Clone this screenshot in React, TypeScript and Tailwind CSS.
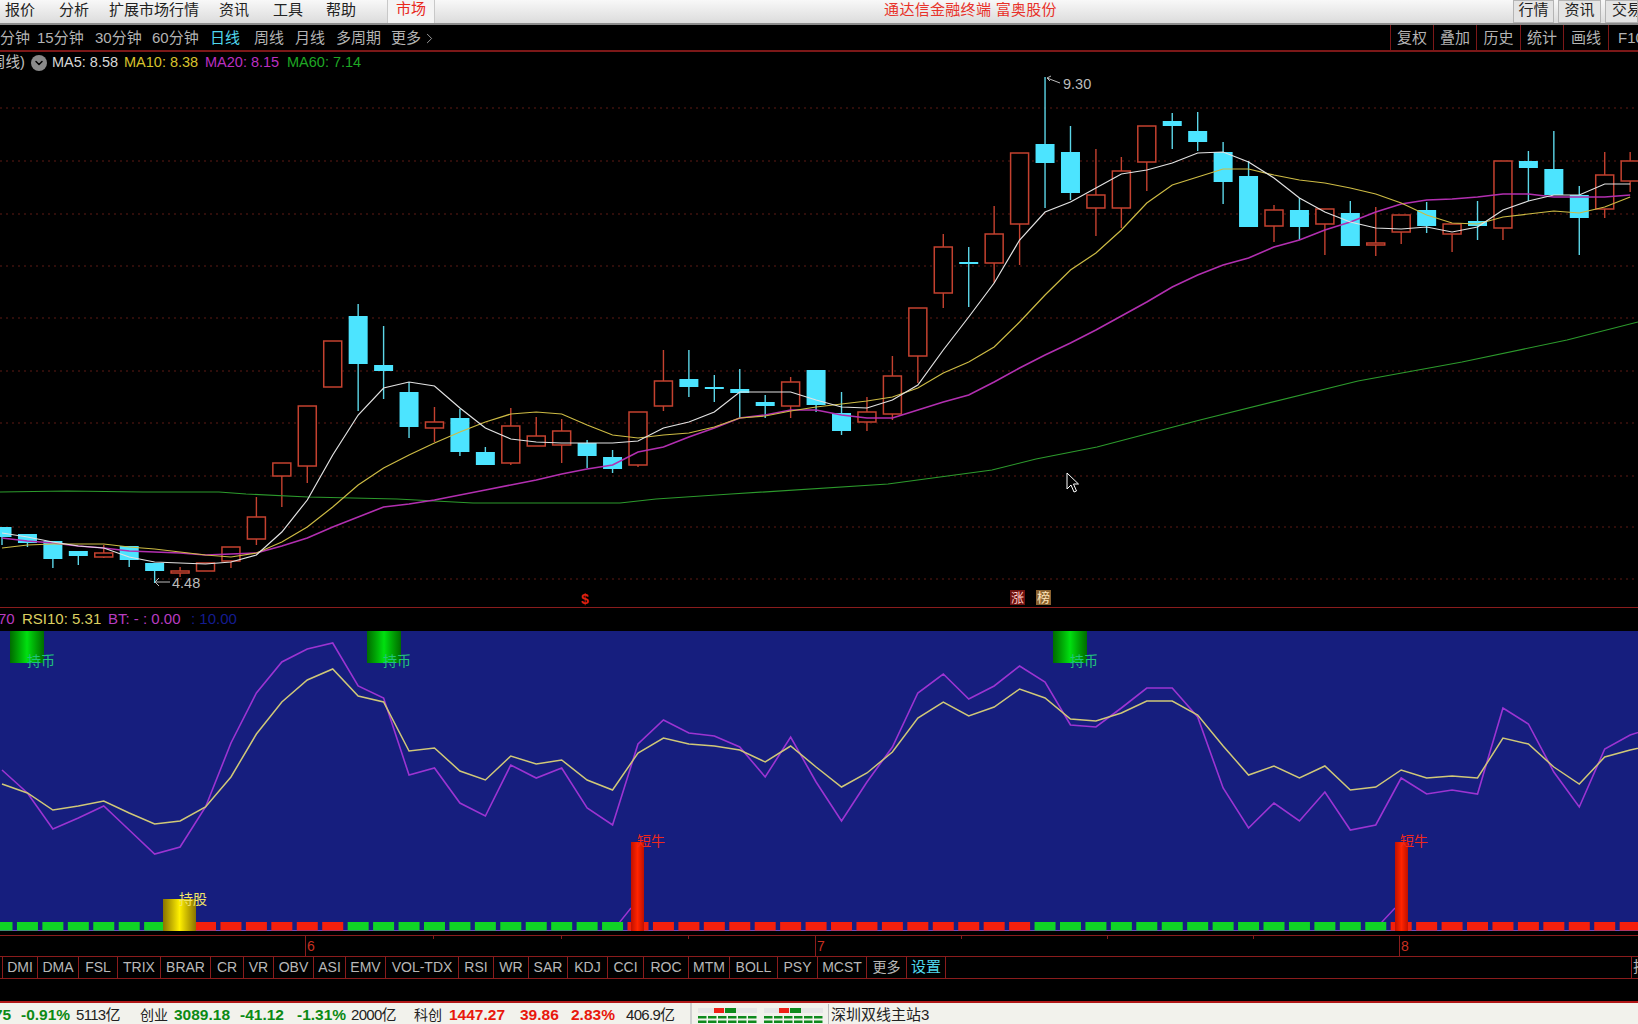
import React from 'react'
import { ChevronDown, ChevronRight } from 'lucide-react'

const RED = '#c4412f'
const CYAN = '#4ce4ff'
const stepX = (i: number) => 2 + 25.44 * i

// top wick, body top, body bottom, low wick, up?
const candles: [number, number, number, number, boolean][] = [
  [527, 527, 537, 545, false], [534, 534, 543, 547, false], [541, 541, 559, 568, false], [551, 551, 556, 565, false],
  [545, 553, 557, 558, true], [546, 546, 560, 567, false], [563, 563, 571, 583, false], [567, 571, 573, 577, true],
  [563, 563, 571, 571, true], [547, 547, 561, 568, true], [497, 517, 539, 545, true], [463, 463, 476, 507, true],
  [406, 406, 466, 483, true], [341, 341, 387, 387, true], [304, 316, 364, 411, false], [326, 365, 371, 399, false],
  [382, 392, 427, 438, false], [407, 422, 428, 442, true], [409, 418, 452, 456, false], [447, 452, 465, 465, false],
  [408, 426, 463, 465, true], [417, 436, 446, 446, true], [419, 431, 445, 463, true], [440, 443, 456, 468, false],
  [450, 457, 469, 473, false], [412, 412, 465, 467, true], [350, 381, 406, 411, true], [350, 379, 387, 397, false],
  [375, 387, 389, 402, false], [369, 389, 393, 418, false], [395, 402, 406, 418, false], [377, 382, 406, 418, true],
  [370, 370, 405, 412, false], [392, 413, 431, 435, false], [397, 412, 422, 431, true], [356, 376, 414, 420, true],
  [308, 308, 356, 383, true], [234, 247, 293, 308, true], [247, 262, 264, 307, false], [206, 234, 263, 283, true],
  [153, 153, 224, 265, true], [77, 144, 163, 208, false], [126, 152, 193, 200, false], [149, 195, 208, 236, true],
  [157, 171, 208, 228, true], [126, 126, 162, 191, true], [113, 121, 126, 149, false], [112, 131, 142, 151, false],
  [142, 152, 182, 204, false], [161, 176, 227, 227, false], [205, 210, 226, 242, true], [198, 210, 227, 240, false],
  [209, 209, 224, 255, true], [201, 213, 246, 246, false], [207, 243, 245, 256, true], [215, 215, 232, 244, true],
  [202, 210, 226, 233, false], [224, 224, 234, 252, true], [201, 221, 226, 240, false], [161, 161, 228, 240, true],
  [151, 161, 168, 201, false], [131, 169, 195, 195, false], [186, 195, 218, 255, false], [152, 175, 209, 218, true],
  [152, 161, 181, 192, true],
]

const ma5 = [533, 537, 542, 546, 548, 557, 562, 563, 564, 562, 555, 532, 500, 455, 415, 388, 382, 386, 408, 428, 439, 442, 443, 443, 443, 441, 428, 422, 412, 392, 392, 392, 400, 407, 408, 400, 385, 350, 317, 283, 240, 212, 202, 188, 174, 170, 163, 153, 152, 162, 178, 198, 212, 222, 228, 229, 227, 232, 227, 210, 201, 195, 195, 184, 184]
const ma10 = [548, 545, 544, 544, 544, 547, 549, 552, 555, 557, 553, 542, 527, 507, 485, 468, 455, 443, 432, 422, 414, 412, 414, 425, 435, 438, 435, 433, 427, 418, 416, 411, 407, 404, 401, 397, 388, 373, 362, 347, 322, 295, 270, 253, 230, 203, 185, 177, 169, 169, 175, 180, 183, 188, 194, 203, 215, 223, 224, 217, 214, 211, 213, 207, 197]
const ma20 = [538, 541, 543, 546, 548, 551, 552, 553, 555, 554, 553, 546, 538, 527, 517, 507, 504, 500, 495, 490, 485, 480, 474, 469, 465, 452, 447, 437, 428, 418, 415, 410, 410, 415, 418, 418, 410, 402, 395, 382, 368, 355, 343, 330, 316, 302, 287, 275, 265, 258, 247, 240, 230, 222, 212, 204, 200, 199, 197, 194, 194, 197, 197, 197, 195]
const ma60: [number, number][] = [[0, 492], [67, 491], [143, 492], [219, 492], [246, 494], [308, 497], [397, 499], [473, 503], [620, 503], [656, 499], [731, 494], [888, 484], [992, 470], [1036, 459], [1097, 447], [1200, 420], [1358, 381], [1462, 362], [1567, 340], [1638, 322]]

const rsiA = [770, 793, 829, 818, 806, 830, 854, 847, 807, 743, 693, 662, 649, 643, 686, 698, 775, 768, 803, 816, 765, 778, 768, 808, 825, 744, 720, 733, 736, 747, 777, 737, 782, 821, 782, 747, 693, 674, 699, 686, 666, 682, 725, 727, 708, 688, 688, 717, 788, 828, 803, 821, 792, 830, 825, 778, 794, 790, 794, 708, 724, 772, 807, 749, 735, 727]
const rsiB = [784, 793, 810, 806, 801, 813, 824, 821, 807, 777, 734, 702, 680, 669, 696, 702, 751, 748, 771, 780, 756, 764, 760, 780, 790, 753, 738, 744, 746, 750, 762, 746, 767, 787, 773, 752, 718, 702, 716, 707, 689, 698, 719, 721, 713, 701, 701, 715, 746, 775, 766, 778, 766, 790, 787, 770, 778, 776, 778, 738, 744, 767, 784, 757, 750, 744]

const pts = (a: number[]) => a.map((y, i) => `${stepX(i)},${y}`).join(' ')

const blockColor = (i: number) => {
  if (i <= 7) return '#10d426'
  if (i <= 13) return '#f4200c'
  if (i <= 24) return '#10d426'
  if (i <= 40) return '#f4200c'
  if (i <= 54) return '#10d426'
  return '#f4200c'
}

const menu = [
  { t: '报价', c: 'ml-[5px]' },
  { t: '分析', c: 'ml-[24px]' },
  { t: '扩展市场行情', c: 'ml-[20px]' },
  { t: '资讯', c: 'ml-[20px]' },
  { t: '工具', c: 'ml-[24px]' },
  { t: '帮助', c: 'ml-[23px]' },
]

const periods = [
  { t: '分钟', c: 'w-[37px] text-[#b4b4b4]' },
  { t: '15分钟', c: 'w-[58px] text-[#b4b4b4]' },
  { t: '30分钟', c: 'w-[57px] text-[#b4b4b4]' },
  { t: '60分钟', c: 'w-[58px] text-[#b4b4b4]' },
  { t: '日线', c: 'w-[44px] text-[#4fd8ee]' },
  { t: '周线', c: 'w-[41px] text-[#b4b4b4]' },
  { t: '月线', c: 'w-[41px] text-[#b4b4b4]' },
  { t: '多周期', c: 'w-[55px] text-[#b4b4b4]' },
]

const tools = [
  { t: '复权', c: 'w-[43px]' },
  { t: '叠加', c: 'w-[43px]' },
  { t: '历史', c: 'w-[44px]' },
  { t: '统计', c: 'w-[43px]' },
  { t: '画线', c: 'w-[45px]' },
]

const tabs = [
  ['DMI', 'w-[35px]'], ['DMA', 'w-[41px]'], ['FSL', 'w-[39px]'], ['TRIX', 'w-[43px]'], ['BRAR', 'w-[50px]'],
  ['CR', 'w-[33px]'], ['VR', 'w-[30px]'], ['OBV', 'w-[40px]'], ['ASI', 'w-[32px]'], ['EMV', 'w-[40px]'],
  ['VOL-TDX', 'w-[73px]'], ['RSI', 'w-[35px]'], ['WR', 'w-[35px]'], ['SAR', 'w-[39px]'], ['KDJ', 'w-[40px]'],
  ['CCI', 'w-[36px]'], ['ROC', 'w-[45px]'], ['MTM', 'w-[41px]'], ['BOLL', 'w-[48px]'], ['PSY', 'w-[40px]'],
  ['MCST', 'w-[49px]'], ['更多', 'w-[40px]'],
]

const status = [
  { t: '75', c: 'w-[27px] -ml-[6px] font-bold text-[#0c8a14] text-[15.5px]' },
  { t: '-0.91%', c: 'w-[55px] font-bold text-[#0c8a14] text-[15.5px]' },
  { t: '5113亿', c: 'w-[64px] text-[#222] text-[15px] tracking-[-0.7px]' },
  { t: '创业', c: 'w-[34px] text-[#222] text-[14px]' },
  { t: '3089.18', c: 'w-[66px] font-bold text-[#0c8a14] text-[15.5px]' },
  { t: '-41.12', c: 'w-[57px] font-bold text-[#0c8a14] text-[15.5px]' },
  { t: '-1.31%', c: 'w-[54px] font-bold text-[#0c8a14] text-[15.5px]' },
  { t: '2000亿', c: 'w-[63px] text-[#222] text-[15px] tracking-[-0.7px]' },
  { t: '科创', c: 'w-[35px] text-[#222] text-[14px]' },
  { t: '1447.27', c: 'w-[71px] font-bold text-[#e8180c] text-[15.5px]' },
  { t: '39.86', c: 'w-[51px] font-bold text-[#e8180c] text-[15.5px]' },
  { t: '2.83%', c: 'w-[55px] font-bold text-[#e8180c] text-[15.5px]' },
  { t: '406.9亿', c: 'w-[64px] text-[#222] text-[15px] tracking-[-0.7px]' },
]

const PriceChart = () => (
  <svg viewBox="0 52 1638 555" className="block h-full w-full">
    {[108, 161, 214, 266, 318, 371, 423, 476, 527, 579].map((y) => (
      <line key={y} x1="0" x2="1638" y1={y} y2={y} stroke="#5e1a14" strokeDasharray="2 4" />
    ))}
    {candles.map(([top, a, b, low, up], i) => {
      const x = stepX(i)
      const color = up ? RED : CYAN
      const wick = up ? RED : '#5cd6e8'
      return (
        <g key={i}>
          <line x1={x} x2={x} y1={top} y2={low} stroke={wick} strokeWidth="1.4" />
          {up ? (
            <rect x={x - 9} y={a} width="18" height={b - a} fill="#000" stroke={color} strokeWidth="1.5" />
          ) : (
            <rect x={x - 9.5} y={a} width="19" height={b - a} fill={color} />
          )}
        </g>
      )
    })}
    <polyline points={ma60.map((p) => p.join(',')).join(' ')} fill="none" stroke="#2c9a2c" strokeWidth="1.2" />
    <polyline points={pts(ma20)} fill="none" stroke="#b22fb0" strokeWidth="1.6" />
    <polyline points={pts(ma10)} fill="none" stroke="#cdbb44" strokeWidth="1.2" />
    <polyline points={pts(ma5)} fill="none" stroke="#e2e2e2" strokeWidth="1.2" />
    {/* high / low arrows */}
    <path d="M1060 83 L1047 78 L1051 76 M1047 78 L1050 81" fill="none" stroke="#bbb" strokeWidth="1" />
    <path d="M170 582 H155 L159 578 M155 582 L159 586" fill="none" stroke="#bbb" strokeWidth="1" />
    {/* mouse cursor */}
    <path d="M1067 473 v16 l4 -4 l3 7 l2.5 -1 l-3 -7 h5 z" fill="#000" stroke="#fff" strokeWidth="1" />
  </svg>
)

const RsiPanel = () => (
  <svg viewBox="0 631 1638 300" className="block h-full w-full">
    <polyline points={pts(rsiA)} fill="none" stroke="#9c34d2" strokeWidth="1.6" />
    <polyline points={pts(rsiB)} fill="none" stroke="#d0c878" strokeWidth="1.5" />
    <path d="M619 923 L631 908 M1381 923 L1395 908" stroke="#9c34d2" strokeWidth="1.4" />
    <line x1="0" x2="1638" y1="930.5" y2="930.5" stroke="#6d4fc0" />
    {Array.from({ length: 65 }).map((_, i) => (
      <rect key={i} x={stepX(i) - 10.5} y="922" width="21" height="8.5" fill={blockColor(i)} />
    ))}
  </svg>
)

const App = () => {
  return (
    <div className="flex h-[1024px] w-[1638px] flex-col overflow-hidden bg-black font-['Liberation_Sans','Noto_Sans_CJK_SC',sans-serif] text-[14px]">
      {/* menu bar */}
      <div className="flex h-[25px] shrink-0 items-center border-b-2 border-[#8c8c8c] bg-linear-to-b from-[#f8f8f8] to-[#dcdcdc] pb-[2px] text-[15px] text-[#222]">
        {menu.map((m) => (
          <span key={m.t} className={m.c}>{m.t}</span>
        ))}
        <span className="ml-[31px] flex h-[25px] w-[48px] items-center justify-center border-x border-[#c8c8c8] bg-[#f4f4f4] pb-[2px] text-[#e8281c]">市场</span>
        <span className="ml-[449px] w-[176px] tracking-[0.3px] whitespace-nowrap text-[#e8322a]">通达信金融终端 富奥股份</span>
        <div className="ml-auto flex h-[23px] gap-[4px] self-start">
          <span className="flex w-[41px] items-center justify-center border border-[#b4b4b4] bg-[#e4e4e4] pb-[2px]">行情</span>
          <span className="flex w-[43px] items-center justify-center border border-[#b4b4b4] bg-[#e4e4e4] pb-[2px]">资讯</span>
          <span className="flex w-[33px] items-center justify-start overflow-hidden border border-[#b4b4b4] bg-[#e4e4e4] pb-[2px] pl-[6px] whitespace-nowrap">交易</span>
        </div>
      </div>

      {/* period toolbar */}
      <div className="flex h-[27px] shrink-0 items-center border-b-2 border-[#7c1818] pt-[2px] text-[15px]">
        {periods.map((p) => (
          <span key={p.t} className={p.c}>{p.t}</span>
        ))}
        <span className="flex items-center text-[#b4b4b4]">更多<ChevronRight size={17} strokeWidth={1.2} /></span>
        <div className="ml-auto -mt-[2px] flex h-[25px] text-[#b4b4b4]">
          {tools.map((b) => (
            <span key={b.t} className={`${b.c} flex items-center justify-center border-l border-[#7c1818] pt-[2px]`}>{b.t}</span>
          ))}
          <span className="flex w-[30px] items-center overflow-hidden border-l border-[#7c1818] pt-[2px] pl-[9px] whitespace-nowrap">F10</span>
        </div>
      </div>

      {/* price chart */}
      <div className="relative h-[556px] shrink-0 border-b border-[#8a1c1c]">
        <PriceChart />
        <div className="absolute top-[2px] left-0 flex h-[18px] items-center text-[14.5px] whitespace-nowrap">
          <span className="w-[31px] -indent-[9px] text-[#c0c0c0]">周线)</span>
          <span className="flex h-4 w-4 items-center justify-center rounded-full bg-[#8a8a8a]">
            <ChevronDown size={12} strokeWidth={3} className="text-black" />
          </span>
          <span className="ml-[5px] w-[72px] text-[#d8d8d8]">MA5: 8.58</span>
          <span className="w-[81px] text-[#d8c22c]">MA10: 8.38</span>
          <span className="w-[82px] text-[#bb2fc0]">MA20: 8.15</span>
          <span className="text-[#1fa824]">MA60: 7.14</span>
        </div>
        <span className="absolute top-[22px] left-[1063px] text-[14.5px] text-[#bcbcbc]">9.30</span>
        <span className="absolute top-[521px] left-[172px] text-[14.5px] text-[#bcbcbc]">4.48</span>
        <span className="absolute top-[537px] left-[581px] font-bold text-[#e02010]">$</span>
        <span className="absolute top-[538px] left-[1010px] bg-[#6e1210] px-[1px] text-[13px] leading-[15px] text-[#ffc8c0]">涨</span>
        <span className="absolute top-[538px] left-[1036px] bg-[#8a6230] px-[1px] text-[13px] leading-[15px] text-[#ffe4b8]">榜</span>
      </div>

      {/* indicator header */}
      <div className="flex h-[23px] shrink-0 items-center pb-[1px] text-[15px] whitespace-nowrap">
        <span className="w-[22px] -indent-[2px] text-[#b83cc0]">70</span>
        <span className="w-[86px] text-[#dcd060]">RSI10: 5.31</span>
        <span className="w-[83px] text-[#b83cc0]">BT: - : 0.00</span>
        <span className="text-[#141c90]">: 10.00</span>
      </div>

      {/* indicator panel */}
      <div className="relative h-[300px] shrink-0 bg-[#161e7e]">
        <RsiPanel />
        <div className="absolute top-0 left-[10px] h-[32px] w-[34px] bg-linear-to-r from-[#006c00] via-[#00e010] to-[#006c00]" />
        <div className="absolute top-0 left-[367px] h-[32px] w-[34px] bg-linear-to-r from-[#006c00] via-[#00e010] to-[#006c00]" />
        <div className="absolute top-0 left-[1053px] h-[32px] w-[34px] bg-linear-to-r from-[#006c00] via-[#00e010] to-[#006c00]" />
        <span className="absolute top-[20px] left-[27px] text-[#22c27c]">持币</span>
        <span className="absolute top-[20px] left-[383px] text-[#22c27c]">持币</span>
        <span className="absolute top-[20px] left-[1070px] text-[#22c27c]">持币</span>
        <div className="absolute top-[268px] left-[163px] h-[32px] w-[33px] bg-linear-to-r from-[#8a7400] via-[#fff000] to-[#8a7400]" />
        <span className="absolute top-[258px] left-[179px] text-[#f0e468]">持股</span>
        <div className="absolute top-[211px] left-[631px] h-[89px] w-[13px] bg-linear-to-r from-[#c01000] via-[#ff2400] to-[#c01000]" />
        <span className="absolute top-[200px] left-[637px] text-[#f0281c]">短牛</span>
        <div className="absolute top-[211px] left-[1395px] h-[89px] w-[13px] bg-linear-to-r from-[#c01000] via-[#ff2400] to-[#c01000]" />
        <span className="absolute top-[200px] left-[1400px] text-[#f0281c]">短牛</span>
      </div>

      {/* date axis */}
      <div className="relative mt-[4px] h-[21px] shrink-0 border-t border-[#8a1c1c]">
        {[305, 433, 561, 688, 815, 961, 1107, 1253].map((x) => (
          <i key={x} className="absolute top-0 h-[3px] w-px bg-[#8a1c1c]" style={{ left: x }} />
        ))}
        <span className="absolute top-0 bottom-0 left-[305px] border-l border-[#8a1c1c] pl-[1px] text-[#c83020]">6</span>
        <span className="absolute top-0 bottom-0 left-[815px] border-l border-[#8a1c1c] pl-[1px] text-[#c83020]">7</span>
        <span className="absolute top-0 bottom-0 left-[1399px] border-l border-[#8a1c1c] pl-[1px] text-[#c83020]">8</span>
      </div>

      {/* indicator tabs */}
      <div className="flex h-[23px] shrink-0 items-center border-y border-[#8a1c1c] pl-[2px] text-[#b8b8b8]">
        {tabs.map(([t, w]) => (
          <span key={t} className={`${w} flex h-full items-center justify-center border-l border-[#8a1c1c]`}>{t}</span>
        ))}
        <span className="flex h-full w-[40px] items-center justify-center border-x border-[#8a1c1c] text-[15px] text-[#4fd8ee]">设置</span>
        <span className="ml-auto flex h-full w-[7px] items-center overflow-hidden border-l border-[#8a1c1c] pl-[1px] text-[15px] whitespace-nowrap">指标</span>
      </div>

      <div className="h-[22px] shrink-0" />

      {/* status bar */}
      <div className="flex h-[23px] shrink-0 items-center border-t-2 border-[#b01818] bg-[#f2f2ec] pt-[3px] whitespace-nowrap">
        {status.map((s) => (
          <span key={s.t} className={s.c}>{s.t}</span>
        ))}
        <div className="-mt-[3px] flex h-[21px] w-[138px] border-l-2 border-[#d0d0d0] pl-[6px]">
          <svg viewBox="0 0 130 21" className="h-[21px] w-[130px]">
            {[0, 66].map((g) => (
              <g key={g} transform={`translate(${g} 0)`}>
                <rect x="0" y="5" width="59" height="5" fill="#e6e6e6" />
                <rect x={g === 0 ? 16 : 15} y="5" width="10" height="5" fill="#ee2016" />
                <rect x={g === 0 ? 27 : 26} y="5" width="11" height="5" fill="#0e8a1c" />
                {[0, 1, 2, 3, 4, 5].map((k) => (
                  <g key={k}>
                    <rect x={k * 10} y="13" width="8.5" height="2.5" fill="#0e8a1c" />
                    <rect x={k * 10} y="17.5" width="8.5" height="2.5" fill="#0e8a1c" />
                  </g>
                ))}
              </g>
            ))}
          </svg>
        </div>
        <span className="border-l border-[#bbb] pl-[2px] text-[15px] text-[#222]">深圳双线主站3</span>
      </div>
    </div>
  )
}

export default App
